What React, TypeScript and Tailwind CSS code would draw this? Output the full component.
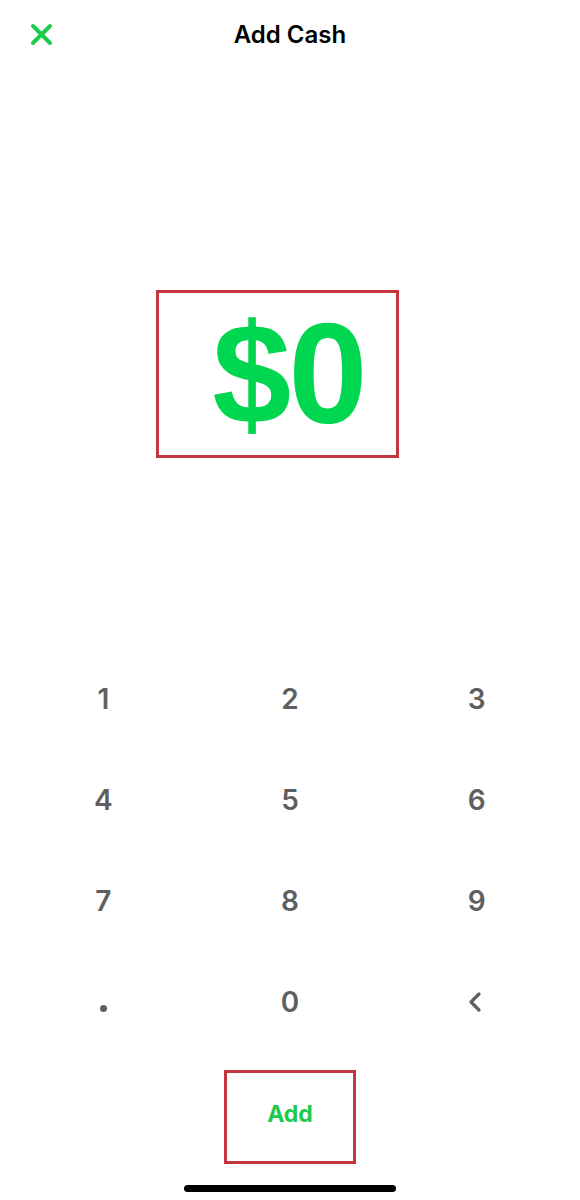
import React from 'react';

const keys = ['1', '2', '3', '4', '5', '6', '7', '8', '9', '.', '0', 'back'];

const Key = ({ k }: { k: string }) => {
    if (k === 'back') {
        return (
            <svg width="16" height="22" viewBox="0 0 16 22" fill="none" className="mr-[4px]">
                <path d="M12 3L4 11l8 8" stroke="#5f5f5f" strokeWidth="3.2" strokeLinecap="round" strokeLinejoin="round" />
            </svg>
        );
    }
    if (k === '.') {
        return <div className="w-[7px] h-[7px] rounded-full bg-[#5f5f5f] mt-[14px]"></div>;
    }
    return <span className="text-[28px] font-semibold text-[#5f5f5f] leading-none">{k}</span>;
};

const App = () => {
    return (
        <div className="w-[580px] h-[1200px] bg-white flex flex-col font-['Inter',sans-serif] overflow-hidden">

            {/* header */}
            <div className="h-[70px] flex items-center relative">
                <div className="absolute left-[30px] top-[23px]">
                    <svg width="23" height="23" viewBox="0 0 23 23">
                        <path d="M3 3l17 17M20 3L3 20" stroke="#1ec94c" strokeWidth="4" strokeLinecap="round" />
                    </svg>
                </div>
                <div className="w-full text-center text-[24px] font-semibold text-black">Add Cash</div>
            </div>

            {/* amount */}
            <div className="mt-[220px] ml-[156px] w-[243px] h-[168px] border-[3px] border-[#c4353d] flex items-center justify-center pl-[22px]">
                <span className="font-['Liberation_Sans',sans-serif] font-bold text-[142px] leading-none tracking-[-0.02em] text-[#00d64f]">$0</span>
            </div>

            {/* keypad */}
            <div className="mt-[190px] grid grid-cols-3 px-[10px]">
                {keys.map((k) => (
                    <div key={k} className="h-[101px] flex items-center justify-center">
                        <Key k={k} />
                    </div>
                ))}
            </div>

            <div className="mt-[18px] mx-auto w-[132px] h-[94px] border-[3px] border-[#c4353d] flex items-center justify-center pb-[6px]">
                <span className="text-[23px] font-bold text-[#1ec94c]">Add</span>
            </div>

            <div className="mt-[21px] mx-auto w-[212px] h-[7px] rounded-full bg-black"></div>
        </div>
    );
};

export default App;
